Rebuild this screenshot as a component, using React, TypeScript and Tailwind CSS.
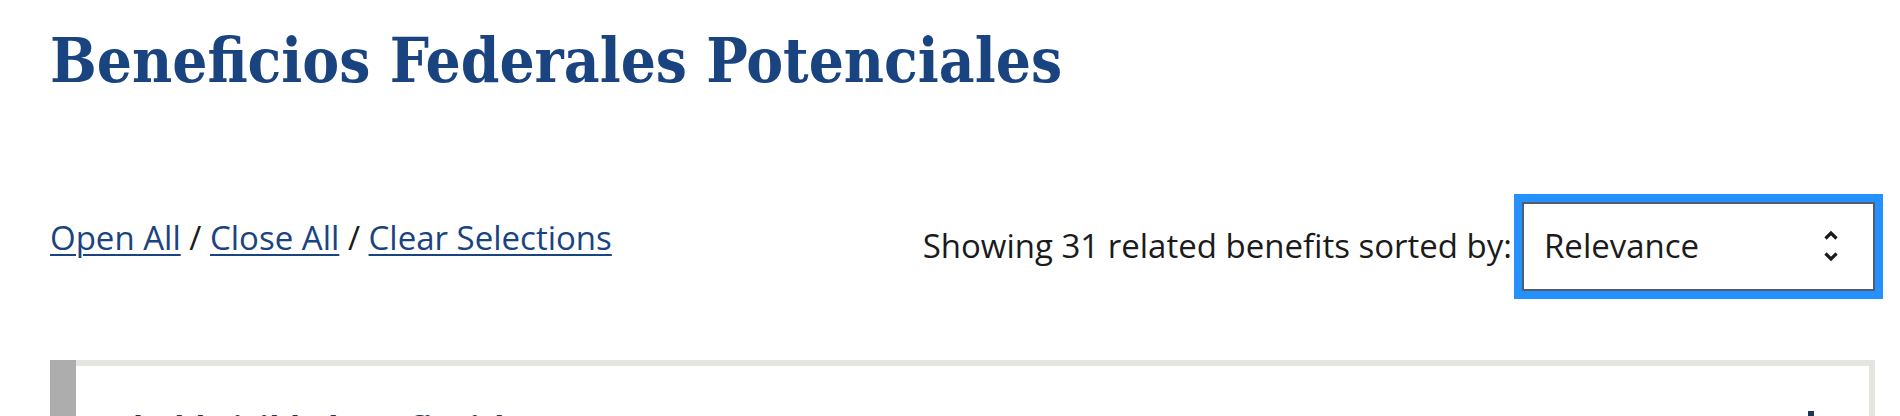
import React from "react";

const sans = "font-['Open_Sans','Noto_Sans',sans-serif]";

function UpDownIcon() {
  return (
    <svg width="16" height="32" viewBox="0 0 16 32" fill="none" aria-hidden="true">
      <path d="M2.5 8.5 L8 3 L13.5 8.5" stroke="#1b1b1b" strokeWidth="3.2" />
      <path d="M2.5 23.5 L8 29 L13.5 23.5" stroke="#1b1b1b" strokeWidth="3.2" />
    </svg>
  );
}

function PlusIcon() {
  return (
    <svg width="26" height="26" viewBox="0 0 26 26" aria-hidden="true">
      <rect x="10" y="0" width="6" height="26" fill="#1f3556" />
      <rect x="0" y="10" width="26" height="6" fill="#1f3556" />
    </svg>
  );
}

export default function App() {
  return (
    <div className={`min-h-[416px] bg-white pl-[50px] pr-[25px] ${sans}`}>
      <h1 className="pt-[30px] font-['DejaVu_Serif_Condensed','DejaVu_Serif',serif] text-[61.5px] font-bold leading-none text-[#1a4480]">
        Beneficios Federales Potenciales
      </h1>

      <div className="mt-[110px] flex items-start justify-between">
        <div className="mt-[19px] text-[33px] leading-none text-[#1b1b1b]">
          <a href="#" className="text-[#1a4480] underline decoration-2 underline-offset-[4px]">
            Open All
          </a>
          {" / "}
          <a href="#" className="text-[#1a4480] underline decoration-2 underline-offset-[4px]">
            Close All
          </a>
          {" / "}
          <a href="#" className="text-[#1a4480] underline decoration-2 underline-offset-[4px]">
            Clear Selections
          </a>
        </div>

        <div className="flex items-center">
          <span className="mr-[10px] mb-[2px] text-[33px] leading-none text-[#1b1b1b]">
            Showing 31 related benefits sorted by:
          </span>
          <div className="flex h-[89px] w-[353px] items-center justify-between border-2 border-[#565c65] bg-white pl-[20px] pr-[34px] outline-[8px] outline-solid outline-[#2491ff]">
            <span className="mb-[2px] text-[33px] leading-none text-[#1b1b1b]">Relevance</span>
            <UpDownIcon />
          </div>
        </div>
      </div>

      <div className="mt-[69px] flex">
        <div className="w-[26px] shrink-0 bg-[#adadad]" />
        <div className="flex flex-1 items-start justify-between border-t-[6px] border-r-[6px] border-[#e6e4df] pt-[45px] pb-[40px] pl-[57px] pr-[45px]">
          <span className="text-[33px] font-bold leading-none text-[#1f3556]">
            bold visible benefit title
          </span>
          <div>
            <PlusIcon />
          </div>
        </div>
      </div>
    </div>
  );
}
